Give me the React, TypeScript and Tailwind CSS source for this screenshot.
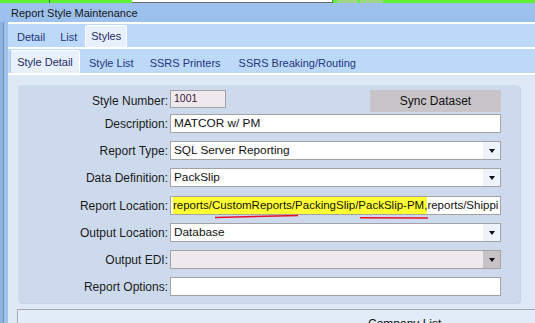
import React from 'react'

type RowProps = { label: string; className?: string; children: React.ReactNode }

// one label + field line of the form
const Row = ({ label, className = '', children }: RowProps) => (
  <div className={`flex items-center ${className}`}>
    <div className="w-[150px] shrink-0 text-right text-[12px] leading-none text-[#1b1b1b]">{label}</div>
    <div className="ml-[2px] flex min-w-0 flex-1">{children}</div>
  </div>
)

const TextBox = ({ value, disabled }: { value?: string; disabled?: boolean }) => (
  <div
    className={`flex h-[19px] min-w-0 flex-1 items-center border border-[#a3a3a3] pl-[3px] text-[11.8px] text-[#111] ${
      disabled ? 'bg-[#efe9ee]' : 'bg-white'
    }`}
  >
    {value}
  </div>
)

const Select = ({ value, disabled }: { value?: string; disabled?: boolean }) => (
  <div
    className={`flex h-[19px] min-w-0 flex-1 items-center border border-[#a3a3a3] ${
      disabled ? 'bg-[#efe9ee]' : 'bg-white'
    }`}
  >
    <span className="flex-1 pl-[3px] text-[11.8px] text-[#111]">{value}</span>
    <span
      className={`flex h-full w-[17px] items-center justify-center ${
        disabled ? 'bg-[#c6c2c6]' : 'bg-[#eef2fb]'
      }`}
    >
      <svg width="6" height="4" viewBox="0 0 6 4">
        <path d="M0 0h6L3 4z" fill="#111" />
      </svg>
    </span>
  </div>
)

const App: React.FC = () => {
  return (
    <div className="relative h-[323px] w-[535px] overflow-hidden bg-[#dfe9f6] font-['Liberation_Sans',Arial,sans-serif]">
      {/* strip of the window behind */}
      <div className="flex h-[3px] bg-[#5ef230]">
        <div className="w-[49px]" />
        <div className="w-[1px] bg-[#3a7a2a]" />
        <div className="w-[82px]" />
        <div className="w-[201px] border-r border-b border-[#6b6b6b] bg-white" />
        <div className="ml-[4px] w-[21px] bg-[#9fd68a]" />
        <div className="ml-[2px] w-[23px] bg-[#9fd68a]" />
      </div>

      {/* title */}
      <div className="flex h-[19px] items-center bg-[#9dc1ed] pl-[11px] pt-[2px] text-[11px] text-[#161616]">
        Report Style Maintenance
      </div>

      <div className="flex">
        {/* left edge */}
        <div className="flex w-[8px] shrink-0 bg-[#9dc1ed]">
          <div className="w-[3px] bg-[#8db3e6]" />
          <div className="w-[1px] bg-[#7d8fa3]" />
        </div>

        <div className="min-w-0 flex-1">
          <div className="h-[2px] bg-white" />
          {/* outer tabs */}
          <div className="flex h-[23px] items-end bg-[#bcd9fa] text-[11px] text-[#24367a]">
            <span className="mb-[2px] ml-[9px]">Detail</span>
            <span className="mb-[2px] ml-[15px]">List</span>
            <span className="ml-[8px] flex h-[22px] w-[42px] items-center justify-center rounded-t-[3px] border border-b-0 border-white bg-[#e8f0fb] text-[#1c2b66]">
              Styles
            </span>
          </div>
          <div className="h-[2px] bg-white" />
          {/* inner tabs */}
          <div className="flex h-[24px] items-end bg-[#bcd9fa] text-[11px] text-[#24367a]">
            <span className="ml-[2px] flex h-[23px] w-[70px] items-center justify-center rounded-t-[3px] border border-b-0 border-l-[#b7c6dc] border-r-white border-t-white bg-[#e8f0fb] text-[#1c2b66]">
              Style Detail
            </span>
            <span className="mb-[2px] ml-[9px]">Style List</span>
            <span className="mb-[2px] ml-[16px]">SSRS Printers</span>
            <span className="mb-[2px] ml-[18px]">SSRS Breaking/Routing</span>
          </div>
          <div className="h-[2px] bg-white" />

          {/* content */}
          <div className="pt-[10px]">
            <div className="ml-[10px] mr-[15px] rounded-[4px] bg-[#cddaed] pb-[7px] pr-[19px] pt-[5px] shadow-[1px_1px_0_#c7d3e4]">
              <Row label="Style Number:" className="h-[22px]">
                <div className="flex h-[18px] w-[56px] items-center border border-[#a3a3a3] bg-[#efe9ee] pl-[3px] text-[10.5px] text-[#3b1a33]">
                  1001
                </div>
                <div className="ml-auto flex h-[22px] w-[131px] items-center justify-center bg-[#c8c4c8] text-[12px] text-[#111]">
                  Sync Dataset
                </div>
              </Row>
              <Row label="Description:" className="mt-[2px]">
                <TextBox value="MATCOR w/ PM" />
              </Row>
              <Row label="Report Type:" className="mt-[8px]">
                <Select value="SQL Server Reporting" />
              </Row>
              <Row label="Data Definition:" className="mt-[8px]">
                <Select value="PackSlip" />
              </Row>
              <Row label="Report Location:" className="mt-[9px]">
                <div className="relative flex h-[19px] min-w-0 flex-1 items-center overflow-hidden border border-[#a3a3a3] bg-white pl-[2px] text-[11.5px] text-[#111]">
                  <span className="whitespace-nowrap">
                    <span className="bg-[#ffff33] py-[3px]">reports/CustomReports/PackingSlip/PackSlip-PM,</span>
                    reports/Shippi
                  </span>
                </div>
                {/* pen marks drawn over the field */}
                <svg className="pointer-events-none absolute left-[214px] top-[214px]" width="220" height="6" viewBox="0 0 220 6">
                  <path d="M1 3.5 L84 1.5" stroke="#e8102a" strokeWidth="1.6" fill="none" />
                  <path d="M146 3.8 L214 4" stroke="#e8102a" strokeWidth="1.6" fill="none" />
                </svg>
              </Row>
              <Row label="Output Location:" className="mt-[8px]">
                <Select value="Database" />
              </Row>
              <Row label="Output EDI:" className="mt-[8px]">
                <Select disabled />
              </Row>
              <Row label="Report Options:" className="mt-[8px]">
                <TextBox />
              </Row>
            </div>

            {/* company list panel */}
            <div className="ml-[9px] mt-[6px] h-[40px] border-l border-t border-[#a9a9a9] bg-[#e2ecf8] pl-[350px] pt-[5px] text-[12px] text-[#111]">
              Company List
            </div>
          </div>
        </div>
      </div>
    </div>
  )
}

export default App
